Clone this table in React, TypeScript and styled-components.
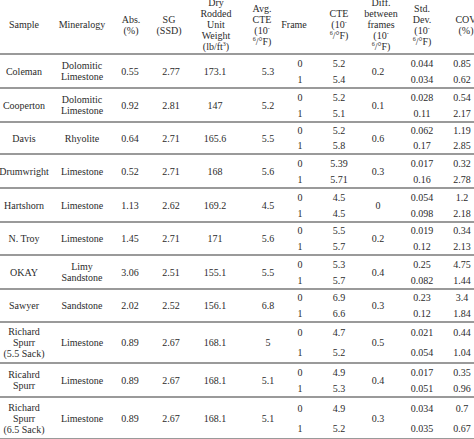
import styled, { createGlobalStyle } from 'styled-components';

const GlobalStyle = createGlobalStyle`
  html, body {
    margin: 0;
    padding: 0;
    background: #fff;
    overflow: hidden;
  }
`;

const COLS = '56px 60px 38px 42px 48px 44px 32px 46px 38px 44px 40px';

type Frame = [string, string, string];

type Group = {
  sample: string[];
  mineral: string[];
  abs: string;
  sg: string;
  dry: string;
  avg: string;
  diff: string;
  frames: [Frame, Frame];
  h: number;
};

const groups: Group[] = [
  { sample: ['Coleman'], mineral: ['Dolomitic', 'Limestone'], abs: '0.55', sg: '2.77', dry: '173.1', avg: '5.3', diff: '0.2', frames: [['5.2', '0.044', '0.85'], ['5.4', '0.034', '0.62']], h: 34 },
  { sample: ['Cooperton'], mineral: ['Dolomitic', 'Limestone'], abs: '0.92', sg: '2.81', dry: '147', avg: '5.2', diff: '0.1', frames: [['5.2', '0.028', '0.54'], ['5.1', '0.11', '2.17']], h: 34 },
  { sample: ['Davis'], mineral: ['Rhyolite'], abs: '0.64', sg: '2.71', dry: '165.6', avg: '5.5', diff: '0.6', frames: [['5.2', '0.062', '1.19'], ['5.8', '0.17', '2.85']], h: 32 },
  { sample: ['Drumwright'], mineral: ['Limestone'], abs: '0.52', sg: '2.71', dry: '168', avg: '5.6', diff: '0.3', frames: [['5.39', '0.017', '0.32'], ['5.71', '0.16', '2.78']], h: 34 },
  { sample: ['Hartshorn'], mineral: ['Limestone'], abs: '1.13', sg: '2.62', dry: '169.2', avg: '4.5', diff: '0', frames: [['4.5', '0.054', '1.2'], ['4.5', '0.098', '2.18']], h: 34 },
  { sample: ['N. Troy'], mineral: ['Limestone'], abs: '1.45', sg: '2.71', dry: '171', avg: '5.6', diff: '0.2', frames: [['5.5', '0.019', '0.34'], ['5.7', '0.12', '2.13']], h: 33 },
  { sample: ['OKAY'], mineral: ['Limy', 'Sandstone'], abs: '3.06', sg: '2.51', dry: '155.1', avg: '5.5', diff: '0.4', frames: [['5.3', '0.25', '4.75'], ['5.7', '0.082', '1.44']], h: 34 },
  { sample: ['Sawyer'], mineral: ['Sandstone'], abs: '2.02', sg: '2.52', dry: '156.1', avg: '6.8', diff: '0.3', frames: [['6.9', '0.23', '3.4'], ['6.6', '0.12', '1.84']], h: 33 },
  { sample: ['Richard', 'Spurr', '(5.5 Sack)'], mineral: ['Limestone'], abs: '0.89', sg: '2.67', dry: '168.1', avg: '5', diff: '0.5', frames: [['4.7', '0.021', '0.44'], ['5.2', '0.054', '1.04']], h: 41 },
  { sample: ['Ricahrd', 'Spurr'], mineral: ['Limestone'], abs: '0.89', sg: '2.67', dry: '168.1', avg: '5.1', diff: '0.4', frames: [['4.9', '0.017', '0.35'], ['5.3', '0.051', '0.96']], h: 34 },
  { sample: ['Richard', 'Spurr', '(6.5 Sack)'], mineral: ['Limestone'], abs: '0.89', sg: '2.67', dry: '168.1', avg: '5.1', diff: '0.3', frames: [['4.9', '0.034', '0.7'], ['5.2', '0.035', '0.67']], h: 42 },
];

function Lines({ lines }: { lines: string[] }) {
  return (
    <>
      {lines.map((l, i) => (
        <span key={i}>{l}</span>
      ))}
    </>
  );
}

export default function App() {
  return (
    <>
      <GlobalStyle />
      <Sheet>
        <HeaderRow>
          <Cell>Sample</Cell>
          <Cell>Mineralogy</Cell>
          <Cell><span>Abs.</span><span>(%)</span></Cell>
          <Cell $shift={-2}><span>SG</span><span>(SSD)</span></Cell>
          <Cell>
            <span>Dry</span><span>Rodded</span><span>Unit</span><span>Weight</span>
            <span>(lb/ft<Sup>3</Sup>)</span>
          </Cell>
          <Cell>
            <span>Avg.</span><span>CTE</span><span>(10<Sup>-</Sup></span>
            <span><Sup>6</Sup>/°F)</span>
          </Cell>
          <Cell $shift={-6}>Frame</Cell>
          <Cell>
            <span>CTE</span><span>(10<Sup>-</Sup></span><span><Sup>6</Sup>/°F)</span>
          </Cell>
          <Cell>
            <span>Diff.</span><span>between</span><span>frames</span>
            <span>(10<Sup>-</Sup></span><span><Sup>6</Sup>/°F)</span>
          </Cell>
          <Cell>
            <span>Std.</span><span>Dev.</span><span>(10<Sup>-</Sup></span>
            <span><Sup>6</Sup>/°F)</span>
          </Cell>
          <Cell $shift={2}><span>COV</span><span>(%)</span></Cell>
        </HeaderRow>
        {groups.map((g) => (
          <GroupRow key={g.sample.join(' ') + g.avg} $h={g.h}>
            <Cell $span><Lines lines={g.sample} /></Cell>
            <Cell $span><Lines lines={g.mineral} /></Cell>
            <Cell $span $shift={-1}>{g.abs}</Cell>
            <Cell $span>{g.sg}</Cell>
            <Cell $span $shift={-1}>{g.dry}</Cell>
            <Cell $span $shift={6}>{g.avg}</Cell>
            <Cell>0</Cell>
            <Cell>{g.frames[0][0]}</Cell>
            <Cell $span $shift={-3}>{g.diff}</Cell>
            <Cell>{g.frames[0][1]}</Cell>
            <Cell $shift={-2}>{g.frames[0][2]}</Cell>
            <Cell>1</Cell>
            <Cell>{g.frames[1][0]}</Cell>
            <Cell>{g.frames[1][1]}</Cell>
            <Cell $shift={-2}>{g.frames[1][2]}</Cell>
          </GroupRow>
        ))}
      </Sheet>
    </>
  );
}

const Sheet = styled.div`
  width: 488px;
  margin: -4px 0 0 -4px;
  font-family: 'Liberation Serif', 'Times New Roman', serif;
  font-size: 10px;
  line-height: 11px;
  color: #2b2b2b;
`;

const HeaderRow = styled.div`
  display: grid;
  grid-template-columns: ${COLS};
  height: 59px;
  box-sizing: border-box;
  border-bottom: 2px solid #9a9a9a;
`;

const GroupRow = styled.div<{ $h: number }>`
  display: grid;
  grid-template-columns: ${COLS};
  grid-template-rows: 1fr 1fr;
  height: ${(p) => p.$h}px;
  box-sizing: border-box;
  border-bottom: 2px solid #9a9a9a;
`;

const Cell = styled.div<{ $span?: boolean; $shift?: number }>`
  display: flex;
  flex-direction: column;
  align-items: center;
  justify-content: center;
  text-align: center;
  white-space: nowrap;
  min-width: 0;
  grid-row: ${(p) => (p.$span ? 'span 2' : 'auto')};
  padding-left: ${(p) => (p.$shift && p.$shift > 0 ? p.$shift * 2 : 0)}px;
  padding-right: ${(p) => (p.$shift && p.$shift < 0 ? -p.$shift * 2 : 0)}px;
`;

const Sup = styled.sup`
  font-size: 6px;
  line-height: 0;
  vertical-align: 4px;
`;
